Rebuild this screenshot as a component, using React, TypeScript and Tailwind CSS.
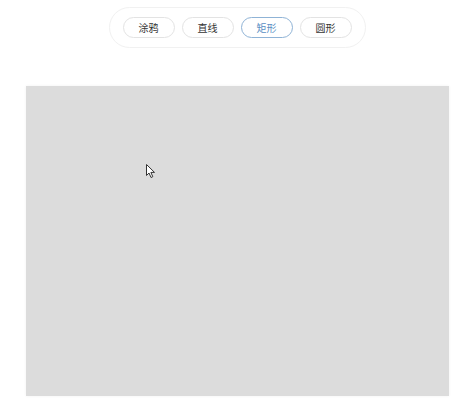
import React, { useState } from "react";

const tools = ["涂鸦", "直线", "矩形", "圆形"];

export default function App() {
  const [active, setActive] = useState("矩形");

  return (
    <main
      className="relative min-h-screen bg-white pt-[7px]"
      style={{ fontFamily: '"Noto Sans CJK SC", "Noto Sans", sans-serif' }}
    >
      <div className="mx-auto flex w-fit items-center gap-[7px] rounded-full border border-[#f1f1f1] px-[13px] py-[9px]">
        {tools.map((tool) => (
          <button
            key={tool}
            onClick={() => setActive(tool)}
            className={
              tool === active
                ? "flex h-[21px] w-[52px] items-center justify-center rounded-full border border-[#8fb3d6] text-[10px] text-[#5b8fc4]"
                : "flex h-[21px] w-[52px] items-center justify-center rounded-full border border-[#e3e3e3] text-[10px] text-[#333333]"
            }
          >
            {tool}
          </button>
        ))}
      </div>

      <div className="mx-auto mt-[38px] h-[310px] w-[423px] bg-[#dcdcdc] shadow-[0_0_3px_rgba(0,0,0,0.06)]" />

      <svg
        className="absolute left-[146px] top-[164px]"
        width="10"
        height="15"
        viewBox="0 0 10 15"
      >
        <path
          d="M0.5 0.5 L0.5 11.5 L3 9 L5 13.5 L6.8 12.7 L4.9 8.4 L8.5 8.4 Z"
          fill="#ffffff"
          stroke="#333333"
          strokeWidth="1"
          strokeLinejoin="round"
        />
      </svg>
    </main>
  );
}
